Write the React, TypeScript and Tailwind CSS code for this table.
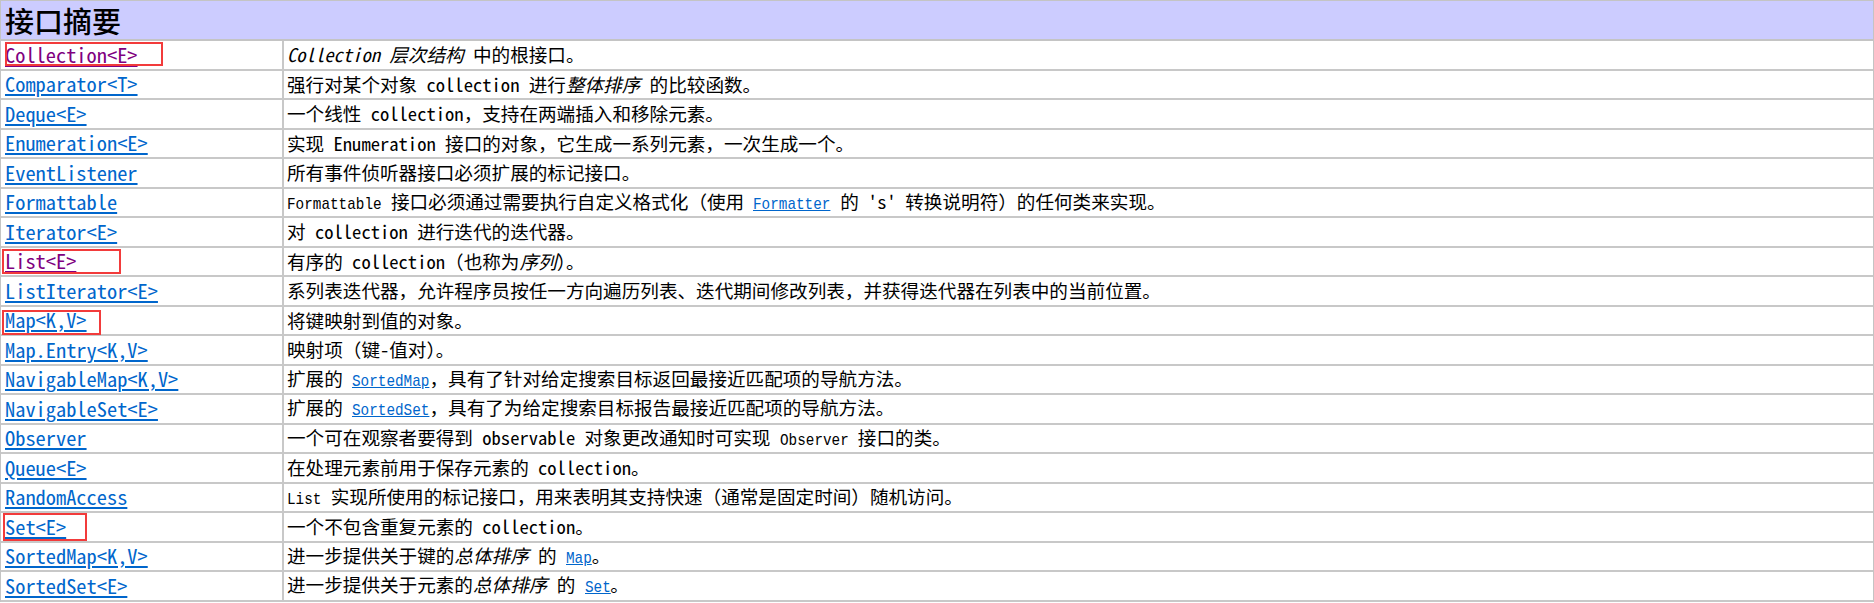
import React from "react";

type Seg = { t: string; k?: "i" | "code" | "clink"; cw?: number };
type Row = { name: string; visited?: boolean; box?: { top: number; left: number; w: number; h: number }; desc: Seg[] };

const rows: Row[] = [
  { name: "Collection<E>", visited: true, box: { top: 1, left: 4, w: 158, h: 24 }, desc: [{ t: "Collection 层次结构", k: "i" }, { t: " 中的根接口。" }] },
  { name: "Comparator<T>", desc: [{ t: "强行对某个对象 collection 进行" }, { t: "整体排序", k: "i" }, { t: " 的比较函数。" }] },
  { name: "Deque<E>", desc: [{ t: "一个线性 collection，支持在两端插入和移除元素。" }] },
  { name: "Enumeration<E>", desc: [{ t: "实现 Enumeration 接口的对象，它生成一系列元素，一次生成一个。" }] },
  { name: "EventListener", desc: [{ t: "所有事件侦听器接口必须扩展的标记接口。" }] },
  {
    name: "Formattable",
    desc: [
      { t: "Formattable", k: "code" },
      { t: " 接口必须通过需要执行自定义格式化（使用 " },
      { t: "Formatter", k: "clink" },
      { t: " 的 's' 转换说明符）的任何类来实现。" },
    ],
  },
  { name: "Iterator<E>", desc: [{ t: "对 collection 进行迭代的迭代器。" }] },
  { name: "List<E>", visited: true, box: { top: 1, left: 1, w: 119, h: 25 }, desc: [{ t: "有序的 collection（也称为" }, { t: "序列", k: "i" }, { t: "）。" }] },
  { name: "ListIterator<E>", desc: [{ t: "系列表迭代器，允许程序员按任一方向遍历列表、迭代期间修改列表，并获得迭代器在列表中的当前位置。" }] },
  { name: "Map<K,V>", box: { top: 3, left: 1, w: 99, h: 25 }, desc: [{ t: "将键映射到值的对象。" }] },
  { name: "Map.Entry<K,V>", desc: [{ t: "映射项（键-值对）。" }] },
  { name: "NavigableMap<K,V>", desc: [{ t: "扩展的 " }, { t: "SortedMap", k: "clink" }, { t: "，具有了针对给定搜索目标返回最接近匹配项的导航方法。" }] },
  { name: "NavigableSet<E>", desc: [{ t: "扩展的 " }, { t: "SortedSet", k: "clink" }, { t: "，具有了为给定搜索目标报告最接近匹配项的导航方法。" }] },
  { name: "Observer", desc: [{ t: "一个可在观察者要得到 observable 对象更改通知时可实现 " }, { t: "Observer", k: "code" }, { t: " 接口的类。" }] },
  { name: "Queue<E>", desc: [{ t: "在处理元素前用于保存元素的 collection。" }] },
  { name: "RandomAccess", desc: [{ t: "List", k: "code" }, { t: " 实现所使用的标记接口，用来表明其支持快速（通常是固定时间）随机访问。" }] },
  { name: "Set<E>", box: { top: 0, left: 2, w: 84, h: 28 }, desc: [{ t: "一个不包含重复元素的 collection。" }] },
  { name: "SortedMap<K,V>", desc: [{ t: "进一步提供关于键的" }, { t: "总体排序", k: "i" }, { t: " 的 " }, { t: "Map", k: "clink" }, { t: "。" }] },
  { name: "SortedSet<E>", desc: [{ t: "进一步提供关于元素的" }, { t: "总体排序", k: "i" }, { t: " 的 " }, { t: "Set", k: "clink" }, { t: "。" }] },
];

// narrow code font: Liberation Mono 17px is 10.2px per char, squeezed to cw
function Code({ t, link, cw = 8.6 }: { t: string; link?: boolean; cw?: number }) {
  return (
    <span className="inline-block whitespace-nowrap align-baseline" style={{ width: t.length * cw }}>
      <span
        className={
          "inline-block origin-left whitespace-nowrap font-['Liberation_Mono',monospace] text-[17px] " +
          (link ? "text-[#0066cc] underline" : "text-black")
        }
        style={{ transform: `scaleX(${cw / 10.2})` }}
      >
        {t}
      </span>
    </span>
  );
}

function Desc({ segs }: { segs: Seg[] }) {
  return (
    <>
      {segs.map((s, i) => {
        if (s.k === "i") return <i key={i}>{s.t}</i>;
        if (s.k === "code") return <Code key={i} t={s.t} cw={s.cw} />;
        if (s.k === "clink") return <Code key={i} t={s.t} link cw={s.cw} />;
        return <span key={i}>{s.t}</span>;
      })}
    </>
  );
}

export default function App() {
  return (
    <div className="w-full bg-white">
      <div className="border-l border-r border-[#c4c4c4]">
        <div className="flex h-[41px] items-center border-t border-b-2 border-[#c4c4c4] bg-[#ccccff] pl-[4px]">
          <span className="font-['Noto_Sans_CJK_SC',sans-serif] text-[29px] font-medium leading-none text-black">接口摘要</span>
        </div>
        {rows.map((r) => (
          <div key={r.name} className="grid h-[29.5px] grid-cols-[283px_1fr] border-b-2 border-[#c8c8c8]">
            <div className="relative flex items-center border-r-2 border-[#c8c8c8] pb-[2px] pl-[4px]">
              <a
                className={
                  "font-['Noto_Sans_Mono_CJK_SC','Liberation_Mono',monospace] text-[20.4px] leading-none underline underline-offset-2 " +
                  (r.visited ? "text-[#800080]" : "text-[#0066cc]")
                }
              >
                {r.name}
              </a>
              {r.box && (
                <div
                  className="absolute border-2 border-[#f23b3b]"
                  style={{ top: r.box.top, left: r.box.left, width: r.box.w, height: r.box.h }}
                />
              )}
            </div>
            <div className="flex items-center whitespace-nowrap pl-[3px] font-['Noto_Sans_Mono_CJK_SC','Noto_Sans_CJK_SC',sans-serif] text-[18.6px] leading-none text-black">
              <span>
                <Desc segs={r.desc} />
              </span>
            </div>
          </div>
        ))}
      </div>
    </div>
  );
}
